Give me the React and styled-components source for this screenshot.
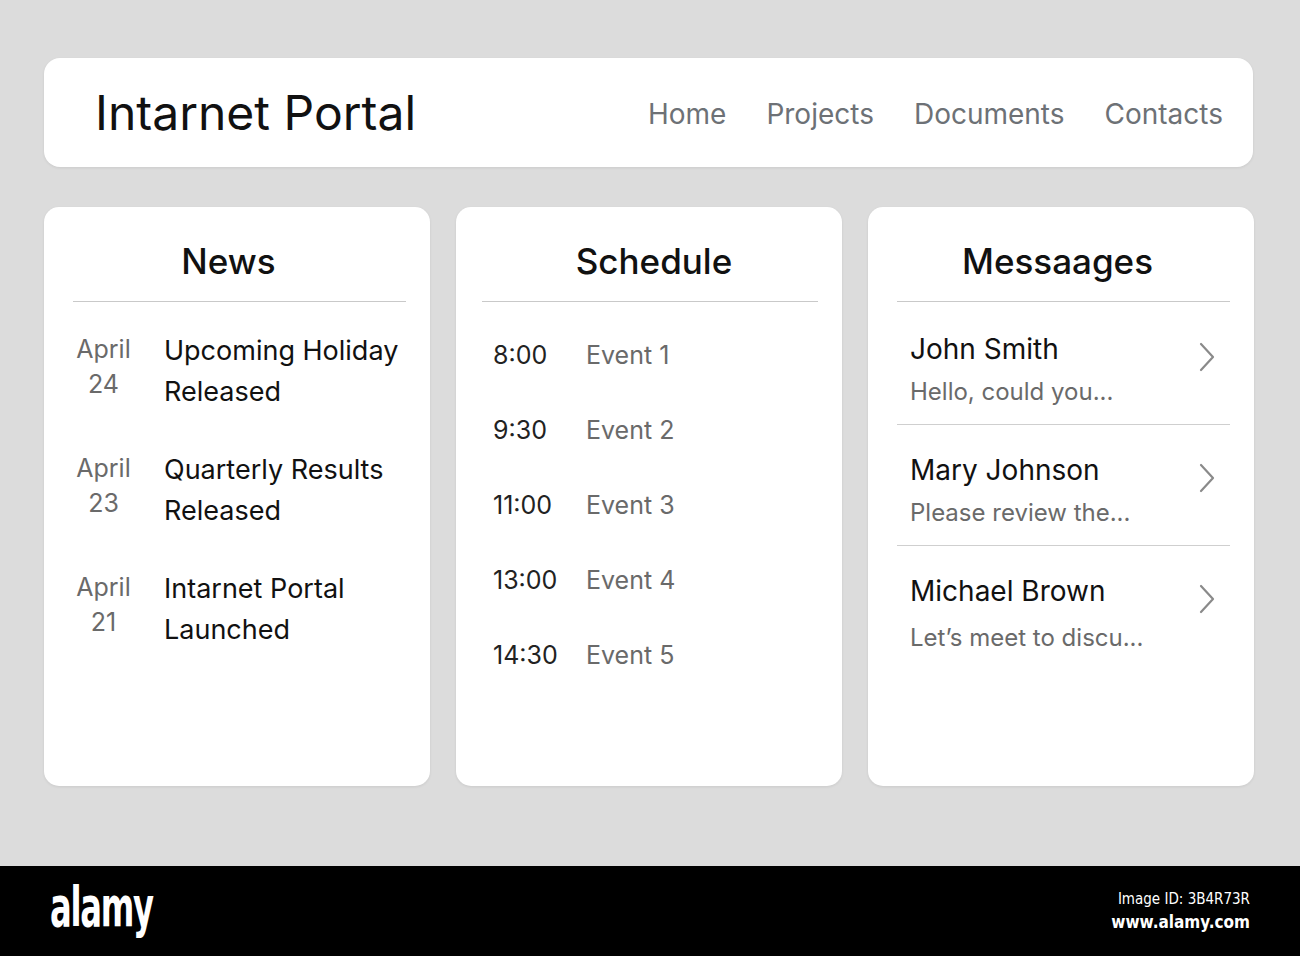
import React from "react";
import styled, { createGlobalStyle } from "styled-components";

const GlobalStyle = createGlobalStyle`
  html, body {
    margin: 0;
    padding: 0;
    background: #dcdcdc;
  }
  body {
    font-family: Inter, "Liberation Sans", sans-serif;
  }
`;

const Page = styled.div`
  width: 1300px;
  height: 956px;
  display: flex;
  flex-direction: column;
  background: #dcdcdc;
  overflow: hidden;
`;

const Content = styled.div`
  flex: 1;
  padding: 58px 47px 0 44px;
  display: flex;
  flex-direction: column;
  gap: 40px;
`;

const Header = styled.header`
  height: 109px;
  background: #fff;
  border-radius: 16px;
  display: flex;
  align-items: center;
  justify-content: space-between;
  padding: 0 30px 0 51px;
  box-shadow: 0 1px 3px rgba(0, 0, 0, 0.08);
`;

const Title = styled.h1`
  margin: 0;
  font-size: 48px;
  font-weight: 400;
  color: #111;
  letter-spacing: 0;
`;

const Nav = styled.nav`
  display: flex;
  gap: 40px;
  padding-top: 2px;
`;

const NavLink = styled.a`
  font-size: 28px;
  color: #6d7176;
  text-decoration: none;
`;

const Columns = styled.div`
  display: grid;
  grid-template-columns: repeat(3, 386px);
  gap: 26px;
`;

const Card = styled.section`
  height: 579px;
  background: #fff;
  border-radius: 15px;
  padding: 0 24px 0 ${(p) => p.$padLeft || 29}px;
  box-sizing: border-box;
  box-shadow: 0 1px 3px rgba(0, 0, 0, 0.08);
`;

const CardTitle = styled.h2`
  margin: 0;
  height: 95px;
  display: flex;
  align-items: center;
  justify-content: center;
  padding-top: 13px;
  padding-right: ${(p) => Math.max(p.$shift || 0, 0)}px;
  padding-left: ${(p) => Math.max(-(p.$shift || 0), 0)}px;
  box-sizing: border-box;
  font-size: 35px;
  font-weight: 500;
  color: #111;
  border-bottom: 1.5px solid #c9c9c9;
`;

const NewsList = styled.div`
  display: flex;
  flex-direction: column;
  gap: 37px;
  padding-top: 28px;
`;

const NewsItem = styled.div`
  display: flex;
  align-items: flex-start;
  gap: 32px;
`;

const DateBlock = styled.div`
  width: 57px;
  display: flex;
  flex-direction: column;
  align-items: center;
  color: #6a6a6a;
  font-size: 25px;
  line-height: 35px;
  margin: 2px 0 0 2px;
`;

const NewsText = styled.div`
  font-size: 27px;
  line-height: 41px;
  color: #111;
`;

const ScheduleList = styled.div`
  display: flex;
  flex-direction: column;
  padding: 33px 0 0 11px;
`;

const ScheduleRow = styled.div`
  height: 75px;
  display: flex;
  align-items: flex-start;
  font-size: 25px;
  line-height: 40px;
`;

const Time = styled.span`
  width: 93px;
  color: #222;
`;

const Event = styled.span`
  color: #6a6a6a;
`;

const MessageRow = styled.div`
  display: flex;
  align-items: flex-start;
  justify-content: space-between;
  padding: ${(p) => (p.$first ? "28px" : "26px")} 14px 15px 13px;
  border-bottom: ${(p) => (p.$last ? "none" : "1.5px solid #cfcfcf")};
`;

const MessageText = styled.div`
  display: flex;
  flex-direction: column;
  gap: ${(p) => (p.$wide ? 11 : 7)}px;
`;

const Name = styled.div`
  font-size: 28px;
  line-height: 38px;
  color: #111;
`;

const Preview = styled.div`
  font-size: 24px;
  line-height: 34px;
  color: #6a6a6a;
`;

const ChevronBox = styled.div`
  margin-top: 12px;
  display: flex;
`;

const Footer = styled.footer`
  height: 90px;
  background: #000;
  display: flex;
  align-items: center;
  justify-content: space-between;
  padding: 0 50px 0 50px;
  color: #fff;
`;

const Logo = styled.div`
  font-family: "DejaVu Sans Condensed", "Liberation Sans Narrow", sans-serif;
  font-weight: 700;
  font-size: 56px;
  letter-spacing: -2px;
  transform: scaleX(0.64);
  transform-origin: left center;
  line-height: 1;
  padding-bottom: 8px;
`;

const FooterInfo = styled.div`
  font-family: "DejaVu Sans Condensed", "Liberation Sans", sans-serif;
  display: flex;
  flex-direction: column;
  align-items: flex-end;
  gap: 4px;
  font-size: 15px;
`;

const FooterUrl = styled.span`
  font-size: 17px;
  font-weight: 700;
`;

const Chevron = () => (
  <svg width="18" height="30" viewBox="0 0 18 30" fill="none">
    <path d="M3 2 L15 15 L3 28" stroke="#8a8a8a" strokeWidth="2.2" strokeLinecap="round" strokeLinejoin="round" />
  </svg>
);

const news = [
  { month: "April", day: "24", lines: ["Upcoming Holiday", "Released"] },
  { month: "April", day: "23", lines: ["Quarterly Results", "Released"] },
  { month: "April", day: "21", lines: ["Intarnet Portal", "Launched"] },
];

const schedule = [
  ["8:00", "Event 1"],
  ["9:30", "Event 2"],
  ["11:00", "Event 3"],
  ["13:00", "Event 4"],
  ["14:30", "Event 5"],
];

const messages = [
  ["John Smith", "Hello, could you..."],
  ["Mary Johnson", "Please review the..."],
  ["Michael Brown", "Let’s meet to discu..."],
];

export default function App() {
  return (
    <Page>
      <GlobalStyle />
      <Content>
        <Header>
          <Title>Intarnet Portal</Title>
          <Nav>
            <NavLink>Home</NavLink>
            <NavLink>Projects</NavLink>
            <NavLink>Documents</NavLink>
            <NavLink>Contacts</NavLink>
          </Nav>
        </Header>
        <Columns>
          <Card>
            <CardTitle $shift={22}>News</CardTitle>
            <NewsList>
              {news.map((n) => (
                <NewsItem key={n.day}>
                  <DateBlock>
                    <span>{n.month}</span>
                    <span>{n.day}</span>
                  </DateBlock>
                  <NewsText>
                    {n.lines[0]}
                    <br />
                    {n.lines[1]}
                  </NewsText>
                </NewsItem>
              ))}
            </NewsList>
          </Card>
          <Card $padLeft={26}>
            <CardTitle $shift={-8}>Schedule</CardTitle>
            <ScheduleList>
              {schedule.map(([t, e]) => (
                <ScheduleRow key={t}>
                  <Time>{t}</Time>
                  <Event>{e}</Event>
                </ScheduleRow>
              ))}
            </ScheduleList>
          </Card>
          <Card>
            <CardTitle $shift={12}>Messaages</CardTitle>
            {messages.map(([name, text], i) => (
              <MessageRow key={name} $first={i === 0} $last={i === messages.length - 1}>
                <MessageText $wide={i === messages.length - 1}>
                  <Name>{name}</Name>
                  <Preview>{text}</Preview>
                </MessageText>
                <ChevronBox>
                  <Chevron />
                </ChevronBox>
              </MessageRow>
            ))}
          </Card>
        </Columns>
      </Content>
      <Footer>
        <Logo>alamy</Logo>
        <FooterInfo>
          <span>Image ID: 3B4R73R</span>
          <FooterUrl>www.alamy.com</FooterUrl>
        </FooterInfo>
      </Footer>
    </Page>
  );
}
